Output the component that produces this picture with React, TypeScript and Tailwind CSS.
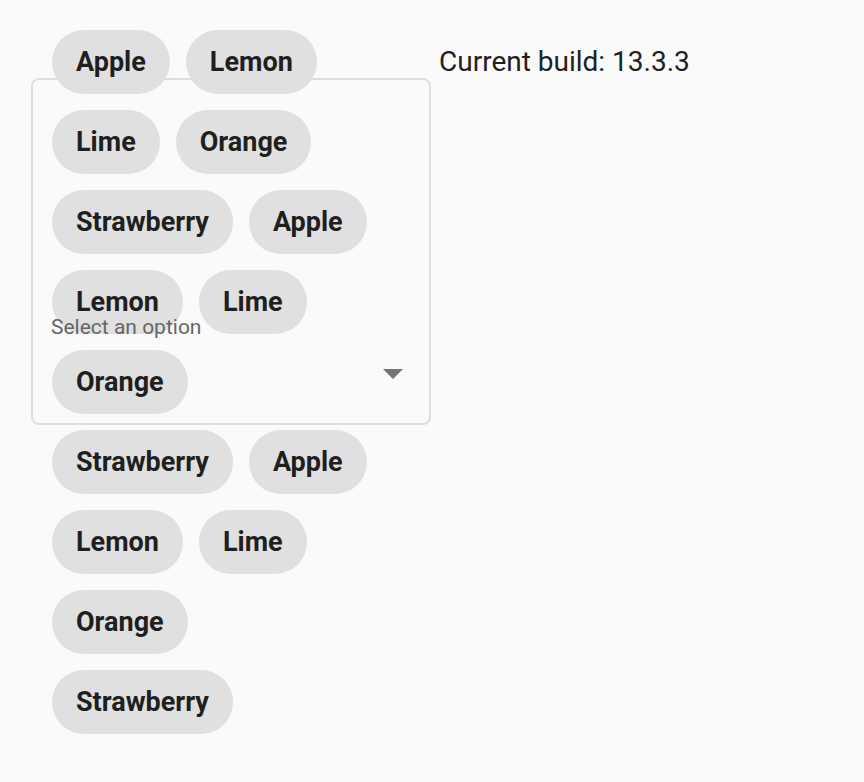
import React from 'react';

const fruits = ['Apple', 'Lemon', 'Lime', 'Orange', 'Strawberry'];

const Chip: React.FC<{ label: string }> = ({ label }) => (
  <div className="h-16 px-6 rounded-full bg-[#e0e0e0] flex items-center text-[27px] font-bold text-[#1f1f1f] whitespace-nowrap">
    {label}
  </div>
);

const App: React.FC = () => {
  // three rounds of the same fruits; they spill outside the select box
  const chips = [...fruits, ...fruits, ...fruits];

  return (
    <div className="min-h-screen bg-[#fafafa] font-['Roboto',sans-serif]">
      <div className="flex items-start pl-[31px] pt-[78px]">
        <div className="relative w-[400px] h-[347px] shrink-0 border-2 border-[#dedede] rounded-lg">
          <div className="relative z-10 -mt-[50px] ml-[19px] w-[324px] flex flex-wrap gap-4">
            {chips.map((f, i) => (
              <Chip key={i} label={f} />
            ))}
          </div>
          <span className="absolute z-20 left-[18px] top-[237px] text-[21px] leading-none text-[#666666] whitespace-nowrap">
            Select an option
          </span>
          <svg className="absolute right-[26px] top-[289px]" width="20" height="10" viewBox="0 0 20 10">
            <path d="M0 0h20L10 10z" fill="#757575" />
          </svg>
        </div>
        <div className="-mt-[48px] ml-[8px] h-16 flex items-center text-[28px] text-[#212121] whitespace-nowrap">
          Current build: 13.3.3
        </div>
      </div>
    </div>
  );
};

export default App;
